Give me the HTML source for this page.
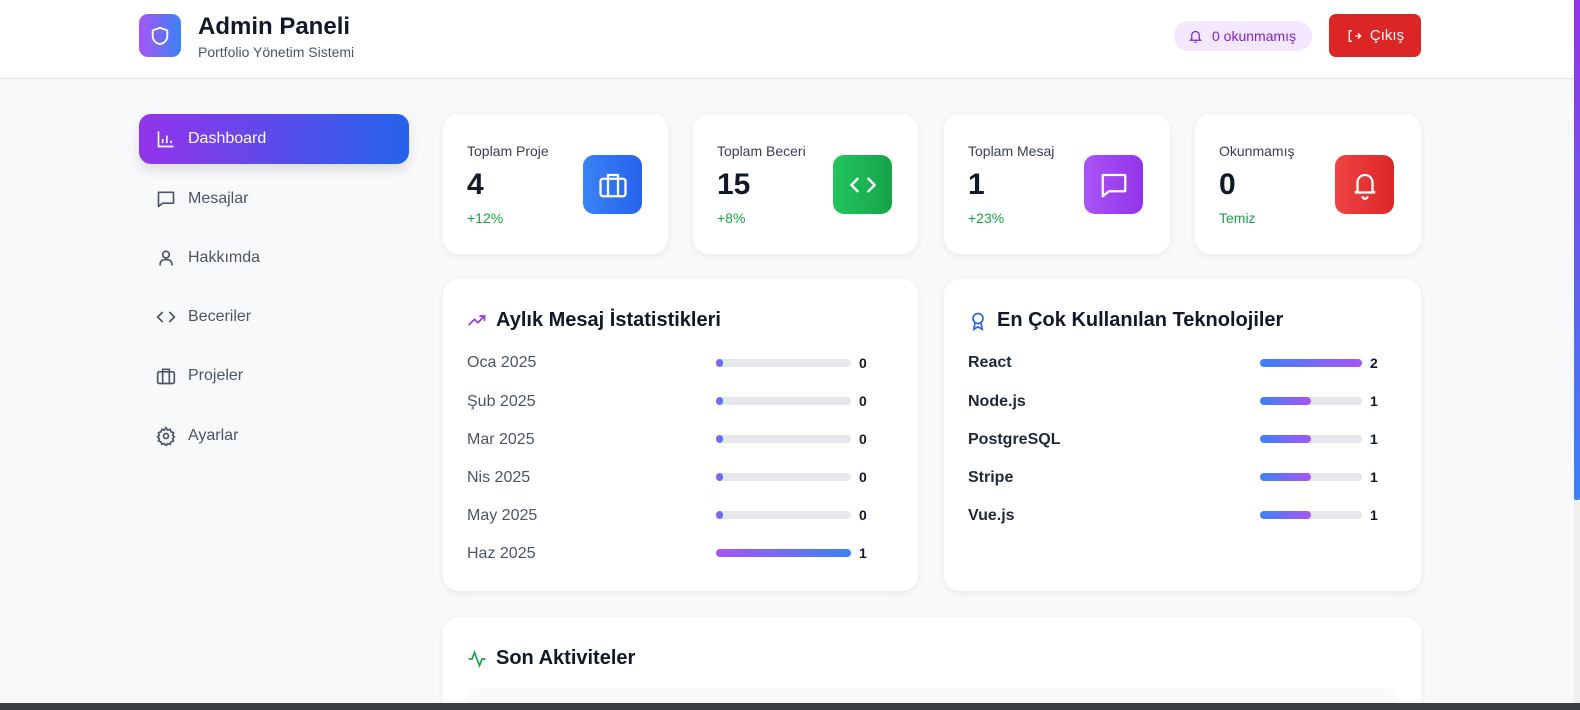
<!DOCTYPE html><html><head><meta charset="utf-8"><style>
*{box-sizing:border-box;margin:0;padding:0}
html{width:1580px;height:710px;overflow:hidden}
body{width:1580px;height:710px;overflow:hidden;background:#f8f9fb;font-family:"Liberation Sans","DejaVu Sans",sans-serif;position:relative;color:#111827}
svg{display:block;flex-shrink:0}
.hdr{position:absolute;left:0;top:0;width:1574px;height:79px;background:#fff;border-bottom:1px solid #e5e7eb;box-shadow:0 1px 2px rgba(0,0,0,.04)}
.logo{position:absolute;left:139px;top:14px;width:42px;height:43px;border-radius:9px;background:linear-gradient(90deg,#a855f7,#3b82f6);display:flex;align-items:center;justify-content:center}
.t1{position:absolute;left:198px;top:13px;font-size:24px;font-weight:bold;color:#111827}
.t2{position:absolute;left:198px;top:44px;font-size:14px;color:#4b5563}
.pill{position:absolute;left:1174px;top:21px;width:138px;height:30px;border-radius:15px;background:#f3e8ff;color:#7e22ce;font-size:14px;display:flex;align-items:center;padding-left:14px;gap:9px}
.out{position:absolute;left:1329px;top:14px;width:92px;height:43px;border-radius:7px;background:#dc2626;color:#fff;font-size:15px;display:flex;align-items:center;justify-content:center;gap:8px}
.nav{position:absolute;left:139px;width:270px;height:50px;display:flex;align-items:center;padding-left:17px;gap:12px;font-size:16px;color:#4b5563}
.nav.act{background:linear-gradient(90deg,#9333ea,#2563eb);color:#fff;border-radius:12px;box-shadow:0 6px 12px rgba(0,0,0,.12)}
.card{position:absolute;background:#fff;border-radius:16px;box-shadow:0 2px 8px rgba(0,0,0,.07);overflow:hidden}
.st .l{position:absolute;left:24px;top:29px;font-size:14px;color:#374151}
.st .v{position:absolute;left:24px;top:54px;font-size:30px;font-weight:bold;color:#111827}
.st .g{position:absolute;left:24px;top:96px;font-size:14px;color:#16a34a}
.st .ic{position:absolute;left:140px;top:41px;width:59px;height:59px;border-radius:11px;display:flex;align-items:center;justify-content:center}
.h{position:absolute;left:24px;top:30px;font-size:20px;font-weight:bold;display:flex;align-items:center;gap:9px;color:#111827}
.row{position:absolute;left:24px;width:410px;font-size:16px;color:#4b5563}
.bar{position:absolute;height:8px;border-radius:4px;background:#e5e7eb}
.fill{position:absolute;left:0;top:0;height:8px;border-radius:4px;background:linear-gradient(90deg,#a855f7,#3b82f6)}
.num{position:absolute;font-size:14px;font-weight:bold;color:#111827}
</style></head><body>
<div class="hdr">
<div class="logo"><svg width="22" height="22" viewBox="0 0 24 24" fill="none" stroke="#fff" stroke-width="2" stroke-linejoin="round"><path d="M12 3l8 3v6c0 5-4 8-8 9-4-1-8-4-8-9V6z"/></svg></div>
<div class="t1">Admin Paneli</div><div class="t2">Portfolio Yönetim Sistemi</div>
<div class="pill"><svg width="15" height="15" viewBox="0 0 24 24" fill="none" stroke="#7e22ce" stroke-width="2"><path d="M6 16V10a6 6 0 0112 0v6l2 2H4z"/><path d="M10 21h4"/></svg>0 okunmamış</div>
<div class="out"><svg width="16" height="16" viewBox="0 0 24 24" fill="none" stroke="#fff" stroke-width="2"><path d="M9 4H5v16h4M14 12h7M18 8l4 4-4 4"/></svg>Çıkış</div>
</div>

<div class="nav act" style="top:114px"><svg width="20" height="20" viewBox="0 0 24 24" fill="none" stroke="#fff" stroke-width="2"><path d="M3 3v18h18M8 17v-5M13 17V8M18 17v-3"/></svg>Dashboard</div>
<div class="nav" style="top:174px"><svg width="20" height="20" viewBox="0 0 24 24" fill="none" stroke="#4b5563" stroke-width="2" stroke-linejoin="round"><path d="M3 4h18v13H8l-5 4z"/></svg>Mesajlar</div>
<div class="nav" style="top:233px"><svg width="20" height="20" viewBox="0 0 24 24" fill="none" stroke="#4b5563" stroke-width="2"><circle cx="12" cy="8" r="4"/><path d="M5 21v-2a5 5 0 015-5h4a5 5 0 015 5v2"/></svg>Hakkımda</div>
<div class="nav" style="top:292px"><svg width="20" height="20" viewBox="0 0 24 24" fill="none" stroke="#4b5563" stroke-width="2"><path d="M8 6l-6 6 6 6M16 6l6 6-6 6"/></svg>Beceriler</div>
<div class="nav" style="top:351px"><svg width="20" height="20" viewBox="0 0 24 24" fill="none" stroke="#4b5563" stroke-width="2"><rect x="2" y="7" width="20" height="14" rx="2"/><path d="M8 7V4h8v3M8 7v14M16 7v14"/></svg>Projeler</div>
<div class="nav" style="top:411px"><svg width="20" height="20" viewBox="0 0 24 24" fill="none" stroke="#4b5563" stroke-width="2"><circle cx="12" cy="12" r="3"/><path d="M12 2l2 3 3-1 1 3 3 1-1 3 2 2-2 2 1 3-3 1-1 3-3-1-2 3-2-3-3 1-1-3-3-1 1-3-2-2 2-2-1-3 3-1 1-3 3 1z"/></svg>Ayarlar</div>

<div class="card st" style="left:443px;top:114px;width:225px;height:140px"><div class="l">Toplam Proje</div><div class="v">4</div><div class="g">+12%</div><div class="ic" style="background:linear-gradient(90deg,#3b82f6,#2563eb)"><svg width="30" height="30" viewBox="0 0 24 24" fill="none" stroke="#fff" stroke-width="1.8"><rect x="2" y="7" width="20" height="14" rx="2"/><path d="M8 7V4h8v3M8 7v14M16 7v14"/></svg></div></div>
<div class="card st" style="left:693px;top:114px;width:225px;height:140px"><div class="l">Toplam Beceri</div><div class="v">15</div><div class="g">+8%</div><div class="ic" style="background:linear-gradient(90deg,#22c55e,#16a34a)"><svg width="28" height="28" viewBox="0 0 24 24" fill="none" stroke="#fff" stroke-width="2"><path d="M8 6l-6 6 6 6M16 6l6 6-6 6"/></svg></div></div>
<div class="card st" style="left:944px;top:114px;width:226px;height:140px"><div class="l">Toplam Mesaj</div><div class="v">1</div><div class="g">+23%</div><div class="ic" style="background:linear-gradient(90deg,#a855f7,#9333ea)"><svg width="30" height="30" viewBox="0 0 24 24" fill="none" stroke="#fff" stroke-width="1.8" stroke-linejoin="round"><path d="M3 4h18v13H8l-5 4z"/></svg></div></div>
<div class="card st" style="left:1195px;top:114px;width:226px;height:140px"><div class="l">Okunmamış</div><div class="v">0</div><div class="g">Temiz</div><div class="ic" style="background:linear-gradient(90deg,#ef4444,#dc2626)"><svg width="30" height="30" viewBox="0 0 24 24" fill="none" stroke="#fff" stroke-width="1.8"><path d="M6 17V10a6 6 0 0112 0v7l2 1H4z"/><path d="M10 21a2 2 0 004 0"/></svg></div></div>

<div class="card" style="left:443px;top:279px;width:475px;height:312px">
<div class="h"><svg width="20" height="20" viewBox="0 0 24 24" fill="none" stroke="#9333ea" stroke-width="2"><path d="M2 17l7-7 4 4 8-8M15 6h6v6"/></svg>Aylık Mesaj İstatistikleri</div>
<div class="row" style="top:75px">Oca 2025</div><div class="bar" style="left:273px;top:80px;width:135px"><div class="fill" style="width:7px"></div></div><div class="num" style="left:416px;top:76px">0</div>
<div class="row" style="top:114px">Şub 2025</div><div class="bar" style="left:273px;top:118px;width:135px"><div class="fill" style="width:7px"></div></div><div class="num" style="left:416px;top:114px">0</div>
<div class="row" style="top:152px">Mar 2025</div><div class="bar" style="left:273px;top:156px;width:135px"><div class="fill" style="width:7px"></div></div><div class="num" style="left:416px;top:152px">0</div>
<div class="row" style="top:190px">Nis 2025</div><div class="bar" style="left:273px;top:194px;width:135px"><div class="fill" style="width:7px"></div></div><div class="num" style="left:416px;top:190px">0</div>
<div class="row" style="top:228px">May 2025</div><div class="bar" style="left:273px;top:232px;width:135px"><div class="fill" style="width:7px"></div></div><div class="num" style="left:416px;top:228px">0</div>
<div class="row" style="top:266px">Haz 2025</div><div class="bar" style="left:273px;top:270px;width:135px"><div class="fill" style="width:135px"></div></div><div class="num" style="left:416px;top:266px">1</div>
</div>

<div class="card" style="left:944px;top:279px;width:477px;height:312px">
<div class="h"><svg width="20" height="20" viewBox="0 0 24 24" fill="none" stroke="#2563eb" stroke-width="2"><circle cx="12" cy="9" r="6"/><path d="M8.5 14L7 22l5-3 5 3-1.5-8"/></svg>En Çok Kullanılan Teknolojiler</div>
<div class="row" style="top:75px;font-weight:bold;color:#1f2937">React</div><div class="bar" style="left:316px;top:80px;width:102px"><div class="fill" style="width:102px;background:linear-gradient(90deg,#3b82f6,#a855f7)"></div></div><div class="num" style="left:426px;top:76px">2</div>
<div class="row" style="top:114px;font-weight:bold;color:#1f2937">Node.js</div><div class="bar" style="left:316px;top:118px;width:102px"><div class="fill" style="width:51px;background:linear-gradient(90deg,#3b82f6,#a855f7)"></div></div><div class="num" style="left:426px;top:114px">1</div>
<div class="row" style="top:152px;font-weight:bold;color:#1f2937">PostgreSQL</div><div class="bar" style="left:316px;top:156px;width:102px"><div class="fill" style="width:51px;background:linear-gradient(90deg,#3b82f6,#a855f7)"></div></div><div class="num" style="left:426px;top:152px">1</div>
<div class="row" style="top:190px;font-weight:bold;color:#1f2937">Stripe</div><div class="bar" style="left:316px;top:194px;width:102px"><div class="fill" style="width:51px;background:linear-gradient(90deg,#3b82f6,#a855f7)"></div></div><div class="num" style="left:426px;top:190px">1</div>
<div class="row" style="top:228px;font-weight:bold;color:#1f2937">Vue.js</div><div class="bar" style="left:316px;top:232px;width:102px"><div class="fill" style="width:51px;background:linear-gradient(90deg,#3b82f6,#a855f7)"></div></div><div class="num" style="left:426px;top:228px">1</div>
</div>

<div class="card" style="left:443px;top:617px;width:978px;height:86px;border-radius:16px 16px 0 0">
<div class="h"><svg width="20" height="20" viewBox="0 0 24 24" fill="none" stroke="#16a34a" stroke-width="2"><path d="M2 12h4l3-8 6 16 3-8h4"/></svg>Son Aktiviteler</div>
<div style="position:absolute;left:24px;top:71px;width:930px;height:15px;background:#f9fafb;border-radius:10px 10px 0 0"></div>
</div>
<div style="position:absolute;left:1574px;top:0;width:6px;height:703px;background:#efefef"></div>
<div style="position:absolute;left:1574px;top:0;width:6px;height:500px;background:linear-gradient(#9333ea,#3b82f6);border-radius:0 0 2px 2px"></div>
<div style="position:absolute;left:0;top:703px;width:1580px;height:7px;background:#3a3d42"></div>
</body></html>
